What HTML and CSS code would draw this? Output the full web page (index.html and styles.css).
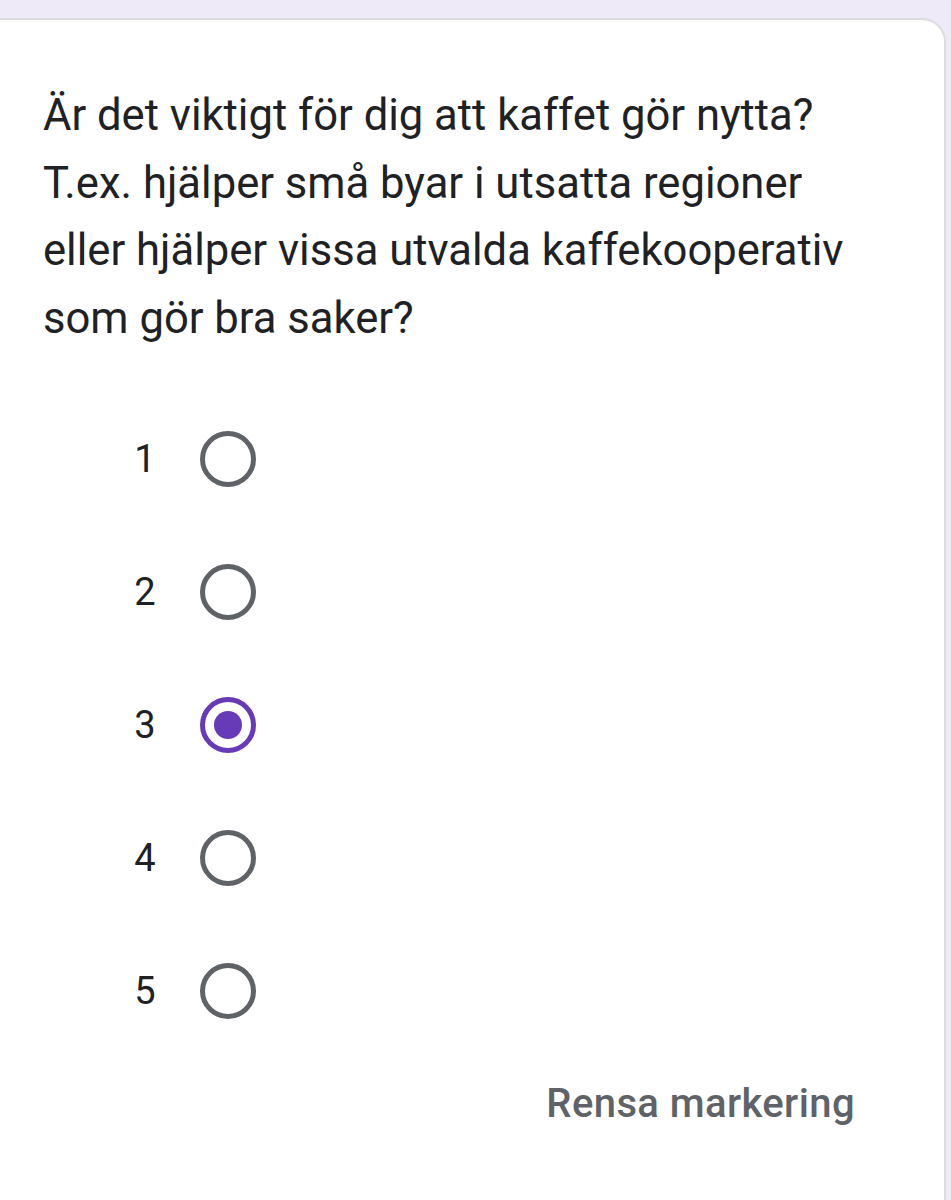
FILE: index.html
```html
<!DOCTYPE html>
<html lang="sv">
<head>
<meta charset="utf-8">
<title>Fråga</title>
<link rel="stylesheet" href="styles.css">
</head>
<body>
<div class="card">
  <div class="question">Är det viktigt för dig att kaffet gör nytta? T.ex. hjälper små byar i utsatta regioner eller hjälper vissa utvalda kaffekooperativ som gör bra saker?</div>
  <div class="options">
    <div class="option"><span class="num">1</span><span class="radio"></span></div>
    <div class="option"><span class="num">2</span><span class="radio"></span></div>
    <div class="option"><span class="num">3</span><span class="radio checked"></span></div>
    <div class="option"><span class="num">4</span><span class="radio"></span></div>
    <div class="option"><span class="num">5</span><span class="radio"></span></div>
  </div>
  <div class="actions"><span class="clear">Rensa markering</span></div>
</div>
</body>
</html>
```

FILE: styles.css
```css
html, body {
  margin: 0;
  padding: 0;
}
body {
  background: #efeaf8;
  font-family: Roboto, "Liberation Sans", Arial, sans-serif;
  color: #202124;
  height: 1200px;
  overflow: hidden;
}
.card {
  margin: 18px 5px 0 -30px;
  background: #fff;
  border: 2px solid #dcdbe0;
  border-radius: 0 24px 0 0;
  padding: 62px 50px 60px 71px;
  min-height: 1200px;
  box-sizing: border-box;
}
.question {
  font-size: 43.6px;
  line-height: 67.5px;
  font-weight: 400;
}
.options {
  margin-top: 40px;
  display: flex;
  flex-direction: column;
}
.option {
  height: 133px;
  display: flex;
  align-items: center;
}
.num {
  width: 40px;
  margin-left: 82px;
  text-align: center;
  font-size: 38px;
  line-height: 1;
}
.radio {
  margin-left: 35px;
  width: 56px;
  height: 56px;
  border: 5.5px solid #5f6368;
  border-radius: 50%;
  box-sizing: border-box;
  display: flex;
  align-items: center;
  justify-content: center;
}
.radio.checked {
  border-color: #673ab7;
}
.radio.checked::after {
  content: "";
  width: 28px;
  height: 28px;
  border-radius: 50%;
  background: #673ab7;
}
.actions {
  display: flex;
  justify-content: flex-end;
  margin-top: 23px;
  padding-right: 39px;
}
.clear {
  font-size: 40px;
  font-weight: 500;
  color: #5f6368;
  letter-spacing: 0.4px;
}
```
